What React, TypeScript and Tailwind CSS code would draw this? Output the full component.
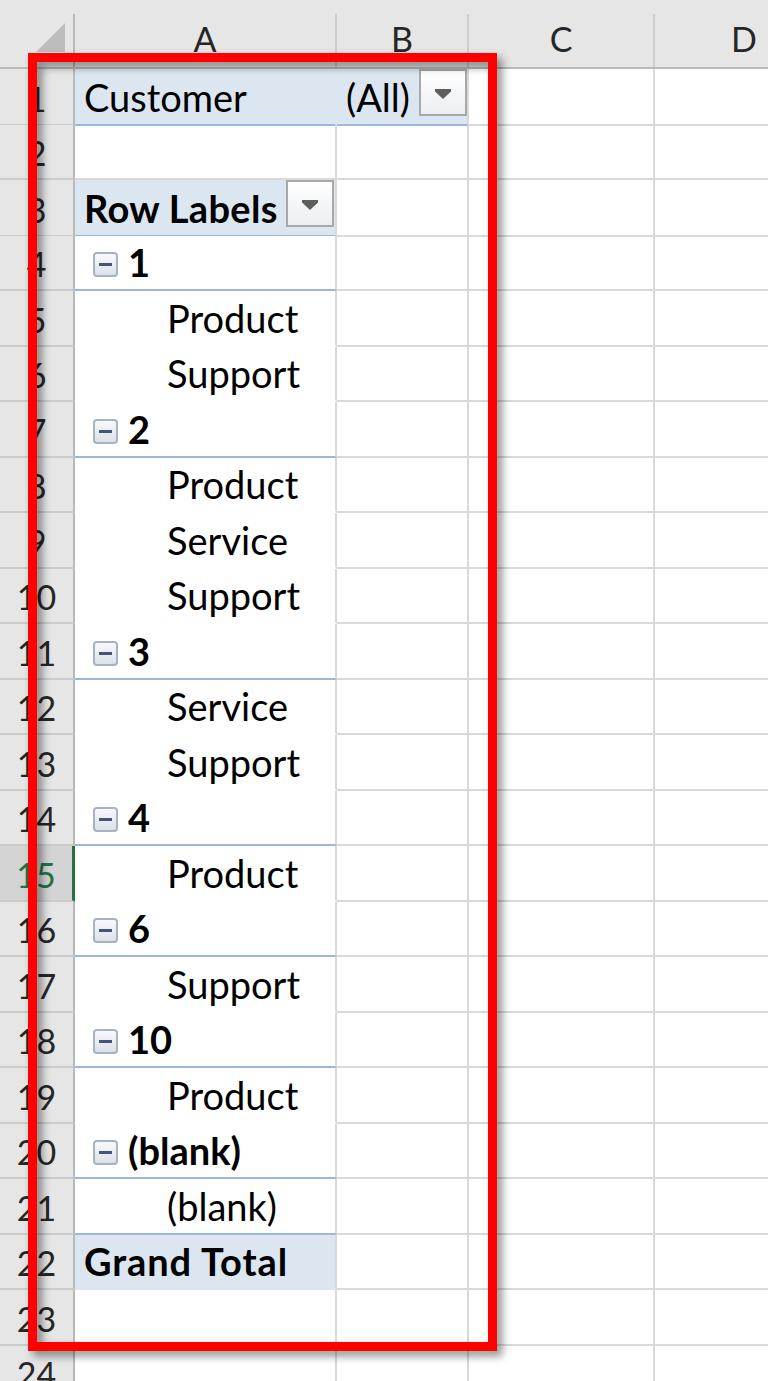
const COLS = "grid grid-cols-[75px_262px_132px_186px_180px]";

type Row =
  | { kind: "empty" }
  | { kind: "filter" }
  | { kind: "labels" }
  | { kind: "group"; text: string }
  | { kind: "item"; text: string }
  | { kind: "total" };

const rows: Row[] = [
  { kind: "filter" },
  { kind: "empty" },
  { kind: "labels" },
  { kind: "group", text: "1" },
  { kind: "item", text: "Product" },
  { kind: "item", text: "Support" },
  { kind: "group", text: "2" },
  { kind: "item", text: "Product" },
  { kind: "item", text: "Service" },
  { kind: "item", text: "Support" },
  { kind: "group", text: "3" },
  { kind: "item", text: "Service" },
  { kind: "item", text: "Support" },
  { kind: "group", text: "4" },
  { kind: "item", text: "Product" },
  { kind: "group", text: "6" },
  { kind: "item", text: "Support" },
  { kind: "group", text: "10" },
  { kind: "item", text: "Product" },
  { kind: "group", text: "(blank)" },
  { kind: "item", text: "(blank)" },
  { kind: "total" },
  { kind: "empty" },
  { kind: "empty" },
];

function DropBtn() {
  return (
    <span className="flex h-[47px] w-[48px] shrink-0 items-center justify-center self-center border-2 border-[#a9a9a9] bg-linear-to-b from-white to-[#eceef1] pt-[2px]">
      <svg width="16" height="10" viewBox="0 0 16 10">
        <path d="M0 0h16v2.5L8 10 0 2.5z" fill="#5e5e5e" />
      </svg>
    </span>
  );
}

function Collapse() {
  return (
    <span className="mb-[4px] mr-[10px] flex h-[25px] w-[25px] shrink-0 items-center justify-center rounded-[4px] border-2 border-[#a7b2c4] bg-linear-to-b from-[#f8f9fb] to-[#dce1e9]">
      <span className="h-[3px] w-[13px] bg-[#45557a]" />
    </span>
  );
}

function cellA(row: Row, next?: Row) {
  const base = "flex items-end pb-[8px] border-r-2 border-b-2 text-black";
  switch (row.kind) {
    case "filter":
      return (
        <div className={`${base} bg-[#dce6f1] border-r-[#dce6f1] border-b-[#9bb8db] pl-[9px]`}>
          Customer
        </div>
      );
    case "labels":
      return (
        <div className={`${base} justify-between bg-[#dce6f1] border-r-[#d9d9d9] border-b-[#9bb8db] pl-[9px] pr-[1px] font-bold tracking-[0.3px]`}>
          <span>Row Labels</span>
          <DropBtn />
        </div>
      );
    case "group":
      return (
        <div className={`${base} bg-white border-r-[#d9d9d9] border-b-[#9bb8db] pl-[18px] font-bold`}>
          <Collapse />
          <span>{row.text}</span>
        </div>
      );
    case "item":
      return (
        <div
          className={`${base} bg-white border-r-[#d9d9d9] pl-[92px] ${
            next?.kind === "total" ? "border-b-[#9bb8db]" : "border-b-white"
          }`}
        >
          {row.text}
        </div>
      );
    case "total":
      return (
        <div className={`${base} bg-[#dce6f1] border-r-[#d9d9d9] border-b-[#dce6f1] pl-[9px] font-bold tracking-[0.9px]`}>
          Grand Total
        </div>
      );
    default:
      return <div className={`${base} border-r-[#d9d9d9] border-b-[#d9d9d9]`} />;
  }
}

function cellB(row: Row) {
  if (row.kind === "filter") {
    return (
      <div className="flex items-end justify-between border-r-2 border-b-2 border-r-[#d9d9d9] border-b-[#9bb8db] bg-[#dce6f1] pb-[8px] pl-[9px] text-black">
        <span>(All)</span>
        <DropBtn />
      </div>
    );
  }
  return <div className="border-r-2 border-b-2 border-[#d9d9d9]" />;
}

export default function App() {
  return (
    <div className="relative h-[1381px] w-[768px] overflow-hidden bg-white font-[Lato,'Open_Sans',sans-serif] text-[38px] leading-none">
      {/* column headers */}
      <div className={`${COLS} h-[69px] border-b-2 border-[#b9b9b9] bg-[#e6e6e6] text-[34px] text-[#262626]`}>
        <div className="mt-[14px] flex items-start justify-end border-r-2 border-[#b9b9b9] pr-[8px] pt-[9px]">
          <svg width="29" height="29" viewBox="0 0 29 29">
            <path d="M29 0V29H0z" fill="#bdbdbd" />
          </svg>
        </div>
        {["A", "B", "C", "D"].map((l) => (
          <div
            key={l}
            className="mt-[14px] flex items-end justify-center border-r-2 border-[#cdcdcd] pb-[11px]"
          >
            {l}
          </div>
        ))}
      </div>

      {/* sheet rows */}
      {rows.map((row, i) => {
        const n = i + 1;
        const selected = n === 15;
        return (
          <div key={n} className={`${COLS} h-[55.5px]`}>
            <div
              className={`flex items-end justify-center border-b-2 border-b-[#cbcbcb] pb-[8px] text-[34px] ${
                selected
                  ? "border-r-[3px] border-r-[#217346] bg-[#d4d4d4] text-[#217346]"
                  : "border-r-2 border-r-[#b9b9b9] bg-[#e6e6e6] text-[#262626]"
              }`}
            >
              {n}
            </div>
            {cellA(row, rows[i + 1])}
            {cellB(row)}
            <div className="border-r-2 border-b-2 border-[#d9d9d9]" />
            <div className="border-r-2 border-b-2 border-[#d9d9d9]" />
          </div>
        );
      })}

      {/* highlight frame */}
      <div className="absolute left-[28px] top-[53px] h-[1298px] w-[469px] border-[9px] border-[#ff0000] [filter:drop-shadow(5px_5px_4px_rgba(0,0,0,0.45))]" />
    </div>
  );
}
